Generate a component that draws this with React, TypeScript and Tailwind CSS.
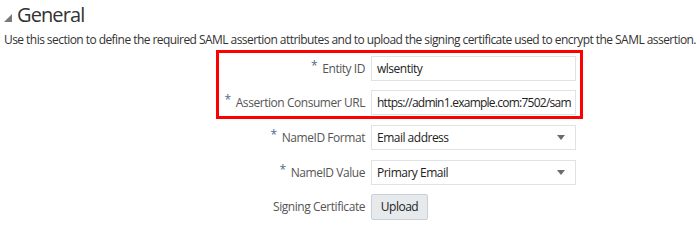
import React from "react";

const font = { fontFamily: '"Open Sans", "Noto Sans", Arial, sans-serif' };

function Star() {
  return <span className="text-[#4a6e8e] mr-[5px] relative top-[-3px]">*</span>;
}

const labelCls = "text-right text-[12px] tracking-[-0.45px] text-[#555] whitespace-nowrap";
const valueCls = "text-[12px] text-[#222] whitespace-nowrap";

function Field({ children, tight }: { children: React.ReactNode; tight?: boolean }) {
  return (
    <div
      className={
        "w-[205px] h-[25px] border border-[#dfe3e6] bg-white flex items-center px-[5px] overflow-hidden " +
        valueCls +
        (tight ? " tracking-[-0.75px]" : " tracking-[-0.5px]")
      }
    >
      {children}
    </div>
  );
}

function SelectField({ children }: { children: React.ReactNode }) {
  return (
    <div className={"w-[205px] h-[25px] border border-[#dfe3e6] bg-white flex items-center justify-between pl-[5px] pr-[10px] tracking-[-0.5px] " + valueCls}>
      <span>{children}</span>
      <svg width="8" height="5" viewBox="0 0 8 5">
        <path d="M0 0 H8 L4 5 Z" fill="#6b6b6b" />
      </svg>
    </div>
  );
}

export default function App() {
  return (
    <div className="w-[700px] h-[227px] bg-white text-[#333] overflow-hidden" style={font}>
      <div className="flex items-center h-[30px] pl-[4px]">
        <svg width="8" height="8" viewBox="0 0 8 8" className="mr-[5px] mt-[6px]">
          <path d="M8 0 V8 H0 Z" fill="#7a7a7a" />
        </svg>
        <span className="text-[20px] tracking-[-0.9px] leading-none text-[#333]">General</span>
      </div>
      <div className="pl-[4px] mt-[2px] text-[12px] tracking-[-0.55px] leading-[16px] text-[#333] whitespace-nowrap">
        Use this section to define the required SAML assertion attributes and to upload the signing certificate used to encrypt the SAML assertion.
      </div>

      <div className="ml-[216px] mt-[2px] w-[367px] h-[69px] border-[3px] border-[#ff0000] flex flex-col gap-[9px] pt-[3px]">
        <div className="flex items-center gap-[6px]">
          <div className={"w-[146px] " + labelCls}>
            <Star />Entity ID
          </div>
          <Field>wlsentity</Field>
        </div>
        <div className="flex items-center gap-[6px]">
          <div className={"w-[146px] " + labelCls}>
            <Star />Assertion Consumer URL
          </div>
          <Field tight>https://admin1.example.com:7502/sam</Field>
        </div>
      </div>

      <div className="flex flex-col mt-[6px]">
        <div className="flex items-center gap-[6px]">
          <div className={"w-[365px] " + labelCls}>
            <Star />NameID Format
          </div>
          <SelectField>Email address</SelectField>
        </div>
        <div className="flex items-center gap-[6px] mt-[10px]">
          <div className={"w-[365px] " + labelCls}>
            <Star />NameID Value
          </div>
          <SelectField>Primary Email</SelectField>
        </div>
        <div className="flex items-center gap-[6px] mt-[9px]">
          <div className={"w-[365px] " + labelCls}>Signing Certificate</div>
          <button className={"h-[26px] w-[57px] border border-[#c9d1d8] bg-[#e6eaed] rounded-[2px] tracking-[-0.5px] " + valueCls}>
            Upload
          </button>
        </div>
      </div>
    </div>
  );
}
